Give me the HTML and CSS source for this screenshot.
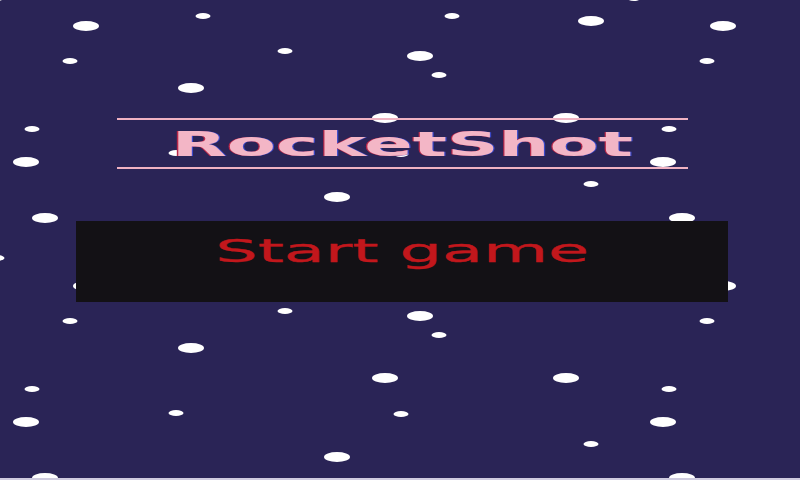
FILE: index.html
```html
<!DOCTYPE html>
<html lang="en">

<head>
    <meta charset="UTF-8">
    <meta name="viewport" content="width=device-width, initial-scale=1.0">
    <title>RocketShot</title>
    <link rel="stylesheet" href="styles.css">
</head>

<body>
    <div id="scene">
        <!-- fondo de estrellas, se repite en mosaico -->
        <svg class="sky" width="800" height="478">
            <defs>
                <pattern id="stars" width="637" height="260" patternUnits="userSpaceOnUse">
                    <g fill="#fff">
                        <ellipse cx="86" cy="26" rx="13" ry="5" />
                        <ellipse cx="591" cy="21" rx="13" ry="5" />
                        <ellipse cx="420" cy="56" rx="13" ry="5" />
                        <ellipse cx="191" cy="88" rx="13" ry="5" />
                        <ellipse cx="385" cy="118" rx="13" ry="5" />
                        <ellipse cx="566" cy="118" rx="13" ry="5" />
                        <ellipse cx="26" cy="162" rx="13" ry="5" />
                        <ellipse cx="337" cy="197" rx="13" ry="5" />
                        <ellipse cx="45" cy="218" rx="13" ry="5" />

                        <ellipse cx="203" cy="16" rx="7.5" ry="3" />
                        <ellipse cx="452" cy="16" rx="7.5" ry="3" />
                        <ellipse cx="285" cy="51" rx="7.5" ry="3" />
                        <ellipse cx="70" cy="61" rx="7.5" ry="3" />
                        <ellipse cx="439" cy="75" rx="7.5" ry="3" />
                        <ellipse cx="32" cy="129" rx="7.5" ry="3" />
                        <ellipse cx="176" cy="153" rx="7.5" ry="3" />
                        <ellipse cx="401" cy="154" rx="7.5" ry="3" />
                        <ellipse cx="591" cy="184" rx="7.5" ry="3" />
                        <ellipse cx="634" cy="-2" rx="7.5" ry="3" />
                        <ellipse cx="634" cy="258" rx="7.5" ry="3" />
                        <ellipse cx="-3" cy="-2" rx="7.5" ry="3" />
                        <ellipse cx="-3" cy="258" rx="7.5" ry="3" />
                    </g>
                </pattern>
            </defs>
            <rect width="800" height="478" fill="url(#stars)" />
        </svg>

        <div id="menu">
            <h1 class="title"><span>RocketShot</span></h1>
            <div class="start" role="button"><span>Start game</span></div>
        </div>
    </div>
</body>

</html>
```

FILE: styles.css
```css
body {
    margin: 0;
    padding: 0;
    background-color: #cfcbdf;
    font-family: "DejaVu Sans", Verdana, sans-serif;
}

#scene {
    position: relative;
    height: 478px;
    overflow: hidden;
    background-color: #2a2456;
}

.sky {
    position: absolute;
    top: 0;
    left: 0;
}

#menu {
    position: relative;
    width: 652px;
    margin-left: 76px;
    padding-top: 118px;
}

.title {
    margin: 0 40px 52px 41px;
    height: 47px;
    border-top: 2px solid #f0b2c2;
    border-bottom: 2px solid #f0b2c2;
    display: flex;
    align-items: center;
    justify-content: center;
    font-size: 33px;
    font-weight: bold;
    color: #f3b6c6;
}

.title span {
    display: inline-block;
    padding-top: 2px;
    transform: scaleX(2.17);
    text-shadow: -0.6px 0 #b8284a, 0.6px 0 #3a48c8;
}

.start {
    box-sizing: border-box;
    height: 81px;
    padding-top: 12px;
    background-color: #131115;
    font-size: 31.5px;
    line-height: 37px;
    color: #c2171c;
    text-align: center;
    cursor: pointer;
}

.start span {
    display: inline-block;
    transform: scaleX(2.12);
    -webkit-text-stroke: 0.3px #c2171c;
}
```
